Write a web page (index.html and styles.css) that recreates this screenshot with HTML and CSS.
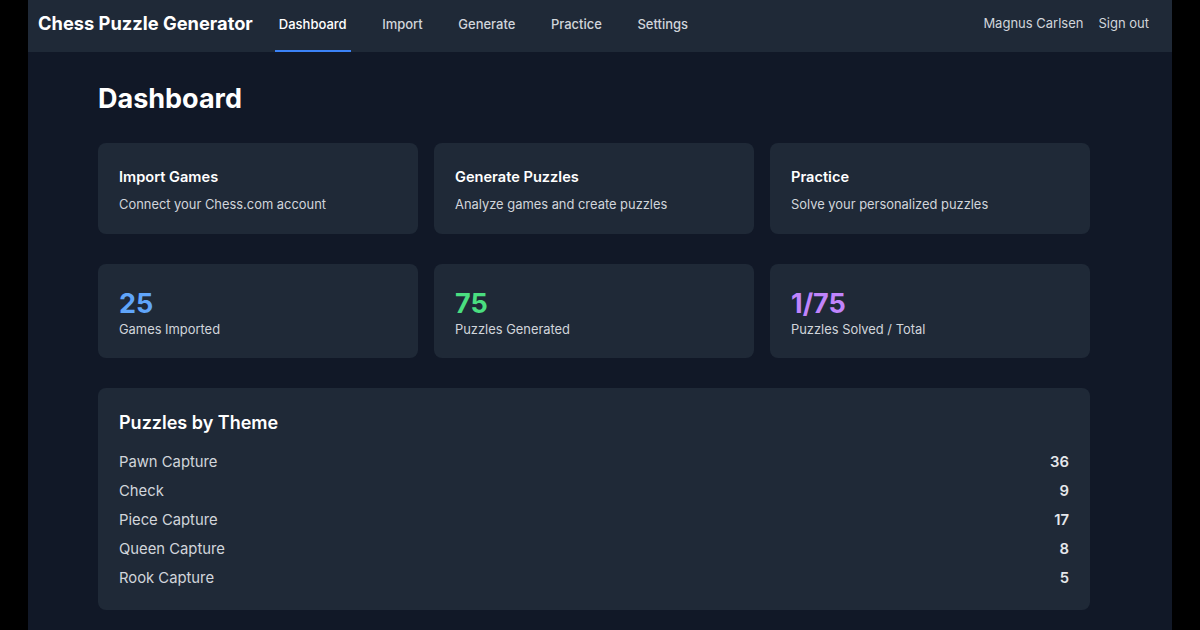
FILE: index.html
```html
<!DOCTYPE html>
<html lang="en">
<head>
    <meta charset="UTF-8">
    <meta name="viewport" content="width=device-width, initial-scale=1.0">
    <title>Chess Puzzle Generator</title>
    <link rel="stylesheet" href="styles.css">
</head>
<body>
    <div class="app">
        <nav class="topbar">
            <div class="brand">Chess Puzzle Generator</div>
            <div class="nav-links">
                <a class="nav-link active" href="#">Dashboard</a>
                <a class="nav-link" href="#">Import</a>
                <a class="nav-link" href="#">Generate</a>
                <a class="nav-link" href="#">Practice</a>
                <a class="nav-link" href="#">Settings</a>
            </div>
            <div class="user">
                <span>Magnus Carlsen</span>
                <a href="#">Sign out</a>
            </div>
        </nav>

        <main class="content">
            <h1>Dashboard</h1>

            <div class="card-row actions">
                <div class="card">
                    <h3>Import Games</h3>
                    <p>Connect your Chess.com account</p>
                </div>
                <div class="card">
                    <h3>Generate Puzzles</h3>
                    <p>Analyze games and create puzzles</p>
                </div>
                <div class="card">
                    <h3>Practice</h3>
                    <p>Solve your personalized puzzles</p>
                </div>
            </div>

            <div class="card-row stats">
                <div class="card">
                    <div class="stat blue">25</div>
                    <div class="stat-label">Games Imported</div>
                </div>
                <div class="card">
                    <div class="stat green">75</div>
                    <div class="stat-label">Puzzles Generated</div>
                </div>
                <div class="card">
                    <div class="stat purple">1/75</div>
                    <div class="stat-label">Puzzles Solved / Total</div>
                </div>
            </div>

            <div class="card themes">
                <h2>Puzzles by Theme</h2>
                <ul id="themeList">
                    <!-- rows filled in by script -->
                </ul>
            </div>
        </main>
    </div>

    <script>
        const themes = [
            { name: "Pawn Capture", count: 36 },
            { name: "Check", count: 9 },
            { name: "Piece Capture", count: 17 },
            { name: "Queen Capture", count: 8 },
            { name: "Rook Capture", count: 5 }
        ];

        const list = document.getElementById('themeList');
        themes.forEach(theme => {
            const li = document.createElement('li');
            li.innerHTML = `<span>${theme.name}</span><span class="count">${theme.count}</span>`;
            list.appendChild(li);
        });
    </script>
</body>
</html>
```

FILE: styles.css
```css
body {
    margin: 0;
    background-color: #000;
    font-family: Inter, "Noto Sans", sans-serif;
    color: #f3f4f6;
}
.app {
    width: 1144px;
    height: 630px;
    margin: 0 auto;
    background-color: #111827;
    overflow: hidden;
}
.topbar {
    height: 52px;
    background-color: #1f2937;
    display: flex;
    align-items: stretch;
    padding: 0 23px 0 10px;
}
.brand {
    font-size: 18.3px;
    line-height: 28px;
    font-weight: 700;
    color: #fff;
    display: flex;
    align-items: center;
    padding-bottom: 6px;
}
.nav-links {
    display: flex;
    gap: 27.5px;
    margin-left: 22px;
}
.nav-link {
    display: flex;
    align-items: center;
    padding: 0 4px 2px;
    font-size: 13px;
    line-height: 20px;
    font-weight: 500;
    color: #d1d5db;
    text-decoration: none;
    border-bottom: 2px solid transparent;
}
.nav-link.active {
    color: #fff;
    border-bottom-color: #3b82f6;
}
.user {
    margin-left: auto;
    display: flex;
    align-items: center;
    gap: 15px;
    font-size: 13px;
    line-height: 20px;
    color: #d1d5db;
    padding-bottom: 7px;
}
.user a {
    color: #d1d5db;
    text-decoration: none;
}
.content {
    width: 992px;
    padding: 29px 0 0 70px;
}
h1 {
    margin: 0 0 26px;
    font-size: 27px;
    line-height: 36px;
    font-weight: 700;
    color: #fff;
}
.card-row {
    display: grid;
    grid-template-columns: repeat(3, 1fr);
    gap: 16px;
    margin-bottom: 30px;
}
.card {
    background-color: #1f2937;
    border-radius: 8px;
    padding: 22px 21px 19px;
}
.card h3 {
    margin: 0 0 6px;
    font-size: 14.6px;
    line-height: 24px;
    font-weight: 600;
    color: #fff;
}
.card p {
    margin: 0;
    font-size: 12.9px;
    line-height: 20px;
    color: #d1d5db;
}
.stats .card {
    padding: 23px 21px 18px;
}
.stat {
    font-size: 27px;
    line-height: 33px;
    font-weight: 700;
}
.stat.blue { color: #60a5fa; }
.stat.green { color: #4ade80; }
.stat.purple { color: #c084fc; }
.stat-label {
    font-size: 12.9px;
    line-height: 20px;
    color: #d1d5db;
}
.themes {
    padding: 21px 21px 20px;
}
.themes h2 {
    margin: 0 0 13px;
    font-size: 18px;
    line-height: 28px;
    font-weight: 600;
    color: #fff;
}
.themes ul {
    list-style: none;
    margin: 0;
    padding: 0;
    display: flex;
    flex-direction: column;
    gap: 5px;
}
.themes li {
    display: flex;
    justify-content: space-between;
    font-size: 14.8px;
    line-height: 24px;
    color: #d1d5db;
}
.themes .count {
    font-weight: 600;
    color: #e5e7eb;
}
```
